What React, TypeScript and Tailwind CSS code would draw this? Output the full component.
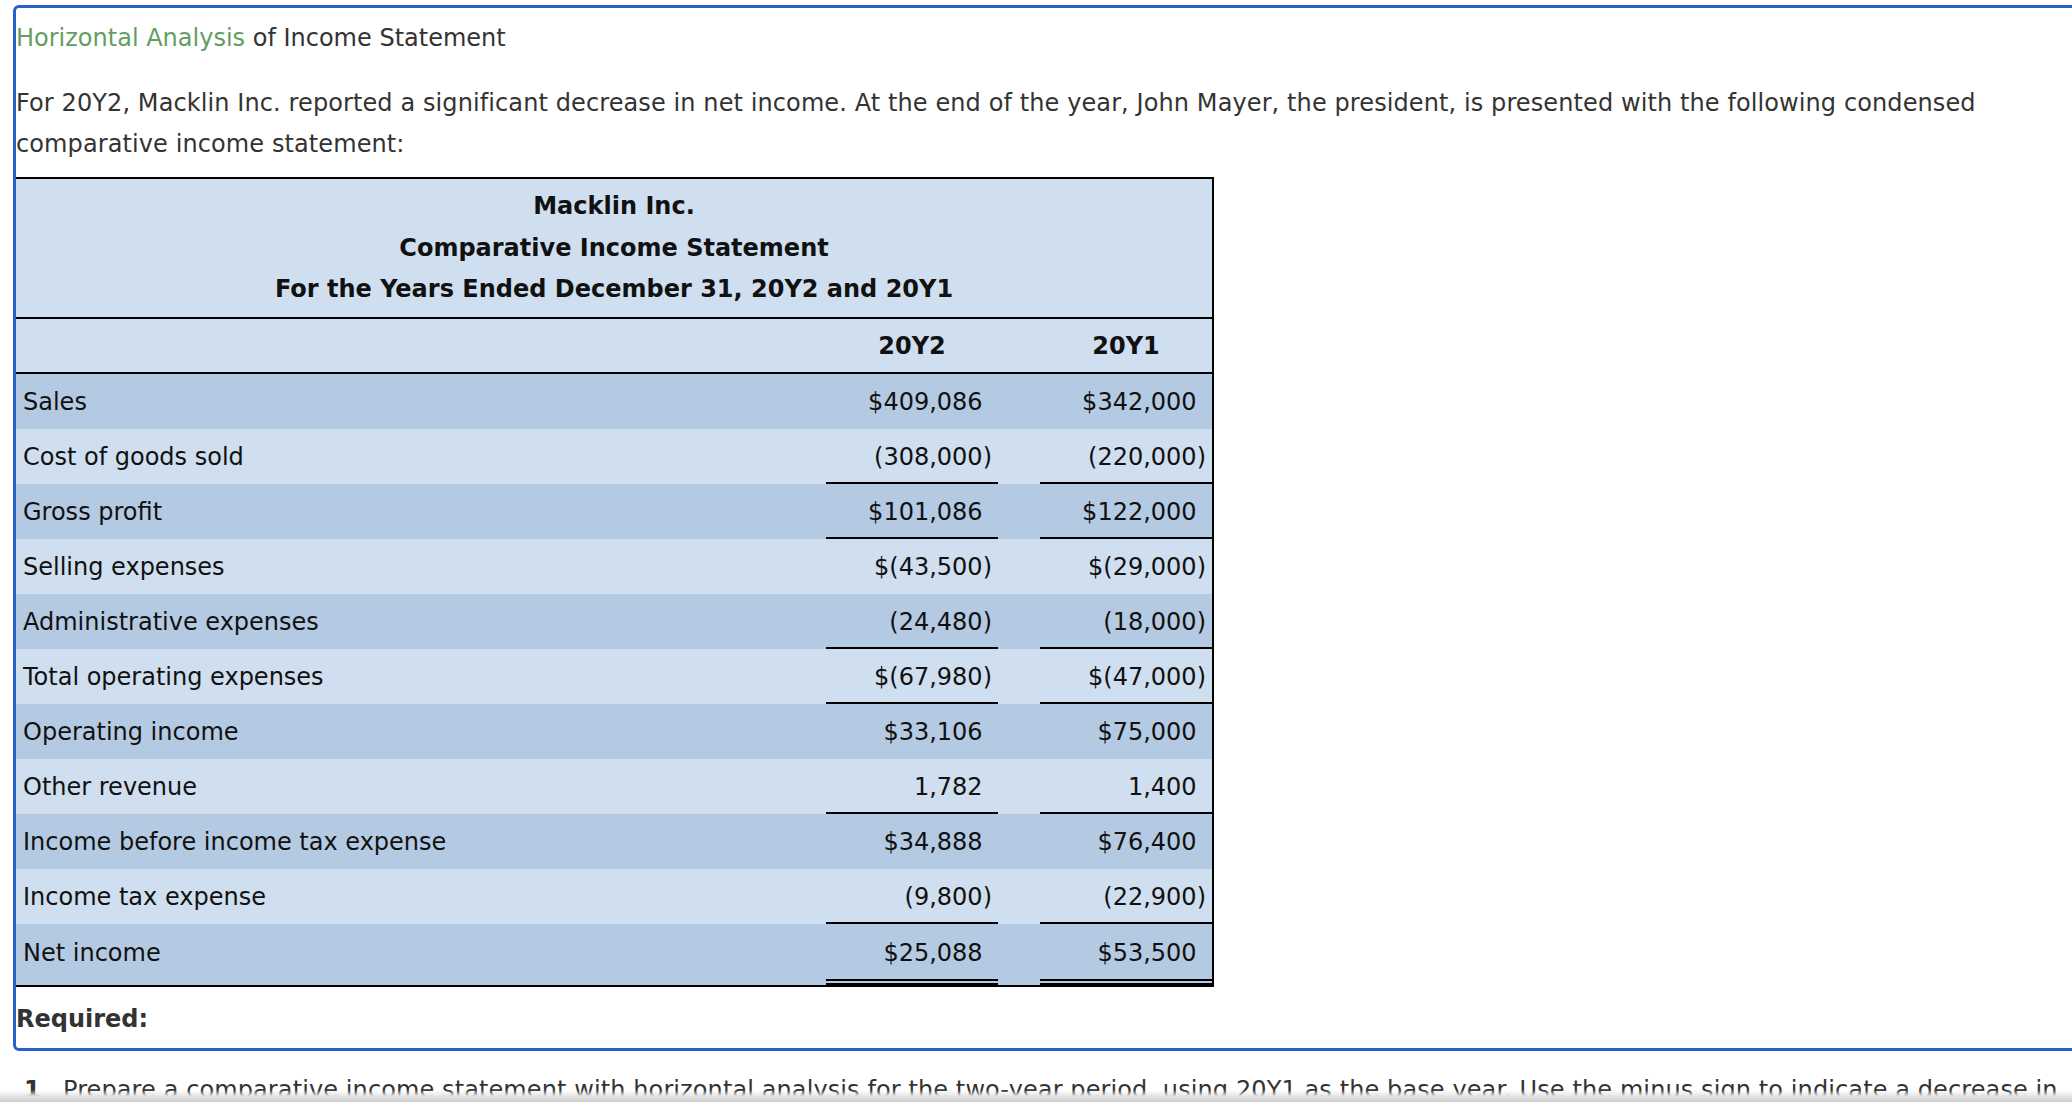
type Row = {
  label: string;
  y2: string;
  y1: string;
  dark: boolean;
  line: "none" | "single" | "double";
};

const rows: Row[] = [
  { label: "Sales", y2: "$409,086", y1: "$342,000", dark: true, line: "none" },
  { label: "Cost of goods sold", y2: "(308,000)", y1: "(220,000)", dark: false, line: "single" },
  { label: "Gross profit", y2: "$101,086", y1: "$122,000", dark: true, line: "single" },
  { label: "Selling expenses", y2: "$(43,500)", y1: "$(29,000)", dark: false, line: "none" },
  { label: "Administrative expenses", y2: "(24,480)", y1: "(18,000)", dark: true, line: "single" },
  { label: "Total operating expenses", y2: "$(67,980)", y1: "$(47,000)", dark: false, line: "single" },
  { label: "Operating income", y2: "$33,106", y1: "$75,000", dark: true, line: "none" },
  { label: "Other revenue", y2: "1,782", y1: "1,400", dark: false, line: "single" },
  { label: "Income before income tax expense", y2: "$34,888", y1: "$76,400", dark: true, line: "none" },
  { label: "Income tax expense", y2: "(9,800)", y1: "(22,900)", dark: false, line: "single" },
  { label: "Net income", y2: "$25,088", y1: "$53,500", dark: true, line: "double" },
];

function Amount({ value }: { value: string }) {
  // keep figures aligned on the digit, parentheses hang to the right
  return (
    <span>
      {value}
      {!value.endsWith(")") && <span className="invisible">)</span>}
    </span>
  );
}

function underline(line: Row["line"]) {
  if (line === "single") return "border-b-2 border-black";
  if (line === "double") return "border-b-[6px] border-double border-black";
  return "border-b-2 border-transparent";
}

export default function App() {
  return (
    <div className="relative w-[2072px] h-[1102px] overflow-hidden bg-white font-['DejaVu_Sans',Verdana,sans-serif] text-[24px] leading-[41px] text-[#333]">
      <div className="ml-[13px] mt-[5px] w-[2090px] border-[3px] border-[#2461c8] rounded-[6px] pt-[10px] pb-[8px]">
        <div>
          <span className="text-[#659d5f]">Horizontal Analysis</span> of Income Statement
        </div>
        <p className="mt-[24px] pr-[40px] tracking-[0.1px]">
          For 20Y2, Macklin Inc. reported a significant decrease in net income. At the end of the year, John Mayer, the
          president, is presented with the following condensed comparative income statement:
        </p>

        <div className="mt-[12px] w-[1198px] border-t-2 border-r-2 border-b-2 border-black text-[#111]">
          <div className="bg-[#cfdfef] border-b-2 border-black pt-[7px] pb-[6.5px] text-center font-bold leading-[41.5px]">
            <div>Macklin Inc.</div>
            <div>Comparative Income Statement</div>
            <div>For the Years Ended December 31, 20Y2 and 20Y1</div>
          </div>
          <div className="flex h-[55px] items-center bg-[#cfdfef] border-b-2 border-black pt-[1px] font-bold">
            <div className="flex-1" />
            <div className="w-[172px] text-center">20Y2</div>
            <div className="w-[42px]" />
            <div className="w-[172px] text-center">20Y1</div>
          </div>

          {rows.map((row) => (
            <div
              key={row.label}
              className={
                row.dark
                  ? "flex items-stretch bg-[#b4cae2]"
                  : "flex items-stretch bg-[#cfdfef]"
              }
            >
              <div
                className={
                  row.line === "double"
                    ? "flex-1 flex h-[61px] items-center pl-[7px] pt-[3px] border-b-[6px] border-transparent"
                    : "flex-1 flex h-[55px] items-center pl-[7px] pt-[3px] border-b-2 border-transparent"
                }
              >
                {row.label}
              </div>
              <div className={`w-[172px] flex items-center justify-end pr-[6px] pt-[3px] ${underline(row.line)}`}>
                <Amount value={row.y2} />
              </div>
              <div className="w-[42px]" />
              <div className={`w-[172px] flex items-center justify-end pr-[6px] pt-[3px] ${underline(row.line)}`}>
                <Amount value={row.y1} />
              </div>
            </div>
          ))}
        </div>

        <div className="mt-[12px] font-bold">Required:</div>
      </div>

      <div className="mt-[19px] flex whitespace-nowrap">
        <span className="w-[63px] shrink-0 pl-[24px] font-bold">1</span>
        <span className="tracking-[0.1px]">
          Prepare a comparative income statement with horizontal analysis for the two-year period, using 20Y1 as the base
          year. Use the minus sign to indicate a decrease in
        </span>
      </div>

      <div className="pointer-events-none absolute bottom-0 left-0 h-[12px] w-full bg-gradient-to-b from-white/0 via-[#e6e6e6] to-[#cdcdcd]" />
    </div>
  );
}
